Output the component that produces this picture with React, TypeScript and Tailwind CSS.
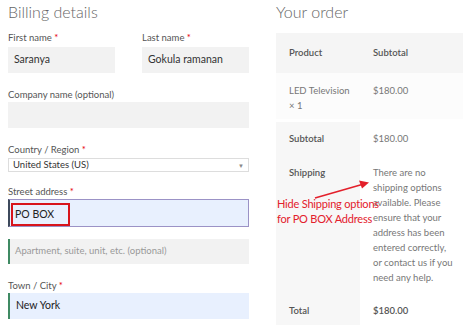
export default function App() {
  const font = { fontFamily: 'Lato, "Liberation Sans", sans-serif' }
  return (
    <div
      style={font}
      className="w-[474px] h-[325px] overflow-hidden bg-white flex text-[#555]"
    >
      {/* Billing details */}
      <div className="w-[249px] pl-2 shrink-0">
        <h3 className="text-[16px] font-light leading-6 text-[#666]">Billing details</h3>

        <div className="mt-[6px] flex gap-[27px]">
          <div className="flex-1">
            <label className="block text-[9.5px] leading-4">
              First name <span className="text-red-600">*</span>
            </label>
            <div className="mt-[1px] h-[26px] bg-[#f2f2f2] flex items-center px-[6px] text-[10.5px] text-[#333]">
              Saranya
            </div>
          </div>
          <div className="flex-1">
            <label className="block text-[9.5px] leading-4">
              Last name <span className="text-red-600">*</span>
            </label>
            <div className="mt-[1px] h-[26px] bg-[#f2f2f2] flex items-center px-[6px] text-[10.5px] text-[#333]">
              Gokula ramanan
            </div>
          </div>
        </div>

        <label className="block mt-[14px] text-[9.5px] leading-4">Company name (optional)</label>
        <div className="mt-[-1px] h-[26px] bg-[#f2f2f2]" />

        <label className="block mt-[14px] text-[9.5px] leading-4">
          Country / Region <span className="text-red-600">*</span>
        </label>
        <div className="h-[14px] border border-[#ddd] bg-white flex items-center justify-between px-1 text-[9.5px] text-[#333]">
          <span>United States (US)</span>
          <span className="text-[6px] text-[#888]">▼</span>
        </div>

        <label className="block mt-[12px] text-[9.5px] leading-4">
          Street address <span className="text-red-600">*</span>
        </label>
        <div className="mt-[-1px] h-[28px] bg-[#e8f0fe] border border-[#9b92c6] border-l-2 border-l-[#3d4a5c] relative">
          <div className="absolute left-[1px] top-[3px] w-[59px] h-[23px] border-2 border-[#d8141c] flex items-center pl-[2px] text-[10.5px] text-[#222]">
            PO BOX
          </div>
        </div>

        <div className="mt-[12px] h-[25px] bg-[#f2f2f2] border-l-2 border-[#3f8a63] flex items-center px-[5px] text-[9.5px] text-[#999]">
          Apartment, suite, unit, etc. (optional)
        </div>

        <label className="block mt-[14px] text-[9.5px] leading-4">
          Town / City <span className="text-red-600">*</span>
        </label>
        <div className="mt-[-1px] h-[26px] bg-[#e8f0fe] border-l-2 border-[#3f8a63] flex items-center px-[6px] text-[10.5px] text-[#222]">
          New York
        </div>
      </div>

      {/* Your order */}
      <div className="ml-[27px] w-[187px] shrink-0 relative">
        <h3 className="text-[16px] font-light leading-6 text-[#666]">Your order</h3>

        <div className="mt-[9px] text-[9.5px]">
          <div className="h-[40px] bg-[#f5f5f5] flex items-center font-semibold text-[#555]">
            <div className="w-[84px] shrink-0 pl-[13px]">Product</div>
            <div className="pl-[13px]">Subtotal</div>
          </div>
          <div className="h-[46px] bg-[#fcfcfc] flex pt-[10px] text-[#777]">
            <div className="w-[84px] shrink-0 pl-[13px] leading-[15px]">
              LED Television
              <br />× 1
            </div>
            <div className="pl-[13px] leading-[15px]">$180.00</div>
          </div>

          <div className="mt-[3px] flex">
            <div className="w-[84px] shrink-0 bg-[#f7f7f7] pl-[13px] font-semibold text-[#555] h-[210px]">
              <div className="pt-[9px] leading-[15px]">Subtotal</div>
              <div className="mt-[19px] leading-[15px]">Shipping</div>
              <div className="mt-[123px] leading-[15px]">Total</div>
            </div>
            <div className="flex-1 pl-[13px] text-[#777]">
              <div className="pt-[9px] leading-[15px]">$180.00</div>
              <div className="mt-[19px] leading-[15px] w-[80px]">
                There are no shipping options available. Please ensure that your address has been
                entered correctly, or contact us if you need any help.
              </div>
              <div className="mt-[18px] leading-[15px] font-semibold text-[#555]">$180.00</div>
            </div>
          </div>
        </div>

        {/* annotation */}
        <div className="absolute left-[1px] top-[196px] text-[11px] tracking-[-0.2px] leading-[15px] text-[#e3202b]">
          Hide Shipping options
          <br />
          for PO BOX Address
        </div>
        <svg className="absolute left-0 top-0" width="187" height="325" viewBox="276 0 187 325">
          <line x1="315" y1="198" x2="362" y2="184.5" stroke="#e3202b" strokeWidth="1.6" />
          <polygon points="369,182.5 359,180.5 362,188.5" fill="#e3202b" />
        </svg>
      </div>
    </div>
  )
}
